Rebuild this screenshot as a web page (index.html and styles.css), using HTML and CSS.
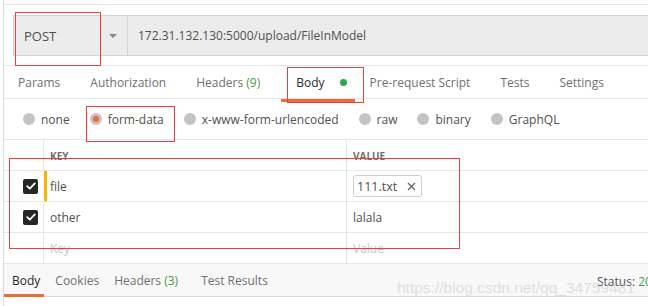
FILE: index.html
```html
<!DOCTYPE html>
<html lang="en">
<head>
    <meta charset="UTF-8">
    <title>Postman - POST upload</title>
    <link rel="stylesheet" href="styles.css">
</head>
<body>
    <div class="app">
        <div class="top-strip"></div>

        <div class="url-row">
            <div class="method">
                <span class="method-name">POST</span>
                <span class="caret"></span>
            </div>
            <div class="url">172.31.132.130:5000/upload/FileInModel</div>
        </div>

        <div class="req-tabs">
            <span class="tab">Params</span>
            <span class="tab">Authorization</span>
            <span class="tab">Headers <span class="count">(9)</span></span>
            <span class="tab active">Body<span class="dot"></span></span>
            <span class="tab">Pre-request Script</span>
            <span class="tab">Tests</span>
            <span class="tab">Settings</span>
        </div>

        <div class="body-types">
            <label class="radio"><span class="circle"></span>none</label>
            <label class="radio on"><span class="circle"></span>form-data</label>
            <label class="radio"><span class="circle"></span>x-www-form-urlencoded</label>
            <label class="radio"><span class="circle"></span>raw</label>
            <label class="radio"><span class="circle"></span>binary</label>
            <label class="radio"><span class="circle"></span>GraphQL</label>
        </div>

        <div class="kv">
            <div class="kv-row head">
                <div class="cell check"></div>
                <div class="cell key">KEY</div>
                <div class="cell value">VALUE</div>
            </div>
            <div class="kv-row">
                <div class="cell check"><span class="box"><svg width="10" height="8" viewBox="0 0 10 8"><path d="M1.2 4.2 L3.8 6.6 L8.8 1.4" fill="none" stroke="#fff" stroke-width="1.8" stroke-linecap="round" stroke-linejoin="round"/></svg></span></div>
                <div class="cell key marked">file</div>
                <div class="cell value"><span class="chip">111.txt <svg width="9" height="9" viewBox="0 0 9 9"><path d="M1 1 L8 8 M8 1 L1 8" stroke="#666" stroke-width="1.4"/></svg></span></div>
            </div>
            <div class="kv-row">
                <div class="cell check"><span class="box"><svg width="10" height="8" viewBox="0 0 10 8"><path d="M1.2 4.2 L3.8 6.6 L8.8 1.4" fill="none" stroke="#fff" stroke-width="1.8" stroke-linecap="round" stroke-linejoin="round"/></svg></span></div>
                <div class="cell key">other</div>
                <div class="cell value">lalala</div>
            </div>
            <div class="kv-row">
                <div class="cell check"></div>
                <div class="cell key placeholder">Key</div>
                <div class="cell value placeholder">Value</div>
            </div>
        </div>

        <div class="res-bar">
            <span class="tab active">Body</span>
            <span class="tab">Cookies</span>
            <span class="tab">Headers <span class="count">(3)</span></span>
            <span class="tab">Test Results</span>
            <span class="status">Status: <span class="count">20</span></span>
        </div>
    </div>

    <!-- annotation boxes drawn over the screenshot -->
    <div class="mark mark-post"></div>
    <div class="mark mark-body"></div>
    <div class="mark mark-form"></div>
    <div class="mark mark-table"></div>
    <div class="watermark">https://blog.csdn.net/qq_34759481</div>
</body>
</html>
```

FILE: styles.css
```css
body {
    margin: 0;
    background: #fff;
    font-family: "Open Sans", "Noto Sans", sans-serif;
    font-size: 12px;
    color: #505050;
    width: 648px;
    height: 306px;
    overflow: hidden;
    position: relative;
}
.app {
    margin-left: 3px;
    border-left: 1px solid #dcdcdc;
    height: 306px;
}
.top-strip {
    height: 4px;
    border-bottom: 1px solid #e6e6e6;
}
.url-row {
    display: flex;
    margin: 10px 0 0 9px;
    height: 39px;
    background: #ececec;
    border: 1px solid #d4d4d4;
    border-right: none;
}
.method {
    width: 114px;
    display: flex;
    align-items: center;
    justify-content: space-between;
    padding: 0 10px;
    box-sizing: border-box;
    border-right: 1px solid #d4d4d4;
}
.method-name {
    font-size: 13px;
    color: #505050;
}
.caret {
    width: 0;
    height: 0;
    border-left: 4px solid transparent;
    border-right: 4px solid transparent;
    border-top: 4px solid #888;
}
.url {
    display: flex;
    align-items: center;
    padding-left: 10px;
    font-size: 12px;
    color: #505050;
}
.req-tabs {
    margin-top: 9px;
    height: 32px;
    display: flex;
    align-items: center;
    border-top: 1px solid #e6e6e6;
    border-bottom: 1px solid #e6e6e6;
    padding-left: 14px;
    gap: 30px;
}
.tab {
    color: #707070;
    font-size: 12px;
    position: relative;
    white-space: nowrap;
}
.tab.active {
    color: #282828;
}
.req-tabs .tab.active {
    margin-left: 6px;
    margin-right: -7px;
}
.req-tabs .tab.active::after {
    content: "";
    position: absolute;
    left: -15px;
    right: -8px;
    bottom: -11px;
    height: 3px;
    background: #e66f3c;
}
.count {
    color: #3ca046;
}
.dot {
    display: inline-block;
    width: 7px;
    height: 7px;
    border-radius: 50%;
    background: #2ea44f;
    margin-left: 15px;
    vertical-align: 1px;
}
.body-types {
    display: flex;
    align-items: center;
    height: 40px;
    padding-left: 19px;
    gap: 20px;
}
.radio {
    display: flex;
    align-items: center;
    font-size: 12px;
    color: #505050;
}
.circle {
    width: 12px;
    height: 12px;
    border-radius: 50%;
    background: #c4c4c4;
    margin-right: 6px;
    position: relative;
}
.radio.on .circle::after {
    content: "";
    position: absolute;
    left: 3px;
    top: 3px;
    width: 6px;
    height: 6px;
    border-radius: 50%;
    background: #ef6b3a;
}
.kv {
    border-top: 1px solid #e6e6e6;
}
.kv-row {
    display: flex;
    height: 30px;
    border-bottom: 1px solid #e6e6e6;
}
.cell {
    display: flex;
    align-items: center;
    box-sizing: border-box;
}
.check {
    width: 39px;
    justify-content: flex-end;
    padding-right: 5px;
}
.key {
    width: 303px;
    border-left: 1px solid #e6e6e6;
    padding-left: 6px;
    font-size: 12px;
    color: #505050;
}
.value {
    flex: 1;
    border-left: 1px solid #e6e6e6;
    padding-left: 6px;
    font-size: 12px;
    color: #505050;
}
.head .key,
.head .value {
    font-size: 10px;
    font-weight: bold;
    color: #707070;
    align-items: flex-start;
    padding-top: 9px;
}
.marked {
    box-shadow: inset 3px 0 0 #f4b400;
    border-left-color: transparent;
}
.box {
    width: 15px;
    height: 15px;
    border-radius: 2px;
    background: #262626;
    display: flex;
    align-items: center;
    justify-content: center;
}
.chip {
    display: inline-flex;
    align-items: center;
    gap: 10px;
    border: 1px solid #cfcfcf;
    border-radius: 3px;
    padding: 1px 5px 1px 3px;
    height: 18px;
    font-size: 12.5px;
}
.placeholder {
    color: #c4c4c4;
}
.res-bar {
    display: flex;
    align-items: center;
    height: 32px;
    background: #f8f8f8;
    border-bottom: 1px solid #dcdcdc;
    padding-left: 8px;
    gap: 15px;
    position: relative;
}
.res-bar .tab.active::after {
    content: "";
    position: absolute;
    left: -8px;
    right: -4px;
    bottom: -8px;
    height: 3px;
    background: #e66f3c;
}
.res-bar .tab:nth-child(4) {
    margin-left: 8px;
}
.status {
    position: absolute;
    left: 593px;
    top: 9px;
    font-size: 12px;
    color: #505050;
    white-space: nowrap;
}
.mark {
    position: absolute;
    border: 1px solid #f03c3c;
}
.mark-post {
    left: 15px;
    top: 12px;
    width: 84px;
    height: 52px;
}
.mark-body {
    left: 287px;
    top: 67px;
    width: 75px;
    height: 34px;
}
.mark-form {
    left: 86px;
    top: 106px;
    width: 87px;
    height: 34px;
}
.mark-table {
    left: 9px;
    top: 158px;
    width: 449px;
    height: 89px;
}
.watermark {
    position: absolute;
    left: 397px;
    top: 279px;
    font-family: "Liberation Sans", Arial, sans-serif;
    font-size: 15.5px;
    color: rgba(200, 200, 200, 0.55);
    white-space: nowrap;
}
```
